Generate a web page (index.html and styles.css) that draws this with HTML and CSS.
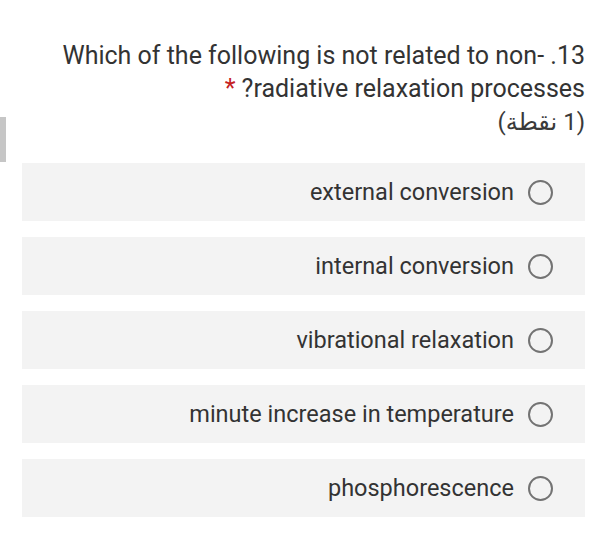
FILE: index.html
```html
<!DOCTYPE html>
<html lang="ar" dir="rtl">
<head>
<meta charset="utf-8">
<link rel="stylesheet" href="styles.css">
</head>
<body>
<div class="side-bar"></div>
<div class="question">
  <div class="title">13. Which of the following is not related to non-radiative relaxation processes? <span class="req">*</span></div>
  <div class="points">(1 نقطة)</div>
  <div class="options">
    <label class="option"><span class="radio"></span><span class="label">external conversion</span></label>
    <label class="option"><span class="radio"></span><span class="label">internal conversion</span></label>
    <label class="option"><span class="radio"></span><span class="label">vibrational relaxation</span></label>
    <label class="option"><span class="radio"></span><span class="label">minute increase in temperature</span></label>
    <label class="option"><span class="radio"></span><span class="label">phosphorescence</span></label>
  </div>
</div>
</body>
</html>
```
FILE: styles.css
```css
html, body {
  margin: 0;
  padding: 0;
  background: #ffffff;
}
body {
  font-family: Roboto, "Noto Sans", Arial, sans-serif;
  color: #333333;
  width: 599px;
  height: 543px;
  overflow: hidden;
  position: relative;
}
.side-bar {
  position: absolute;
  left: 0;
  top: 117px;
  width: 6px;
  height: 45px;
  background: #c6c6c6;
}
.question {
  padding: 39px 14px 0 22px;
}
.title {
  font-size: 25px;
  line-height: 33px;
  color: #333333;
}
.req {
  color: #c5221f;
}
.points {
  font-size: 24px;
  line-height: 32px;
  margin-top: 1px;
  color: #3a3a3a;
  font-family: Roboto, "Noto Sans", "DejaVu Sans", sans-serif;
}
.options {
  margin-top: 25px;
  display: flex;
  flex-direction: column;
  gap: 16px;
}
.option {
  height: 58px;
  background: #f3f3f3;
  display: flex;
  align-items: center;
  gap: 14px;
  padding-right: 32px;
}
.radio {
  box-sizing: content-box;
  width: 21px;
  height: 21px;
  border: 2px solid #737373;
  border-radius: 50%;
  flex: none;
}
.label {
  font-size: 23.5px;
  color: #333333;
}
```
